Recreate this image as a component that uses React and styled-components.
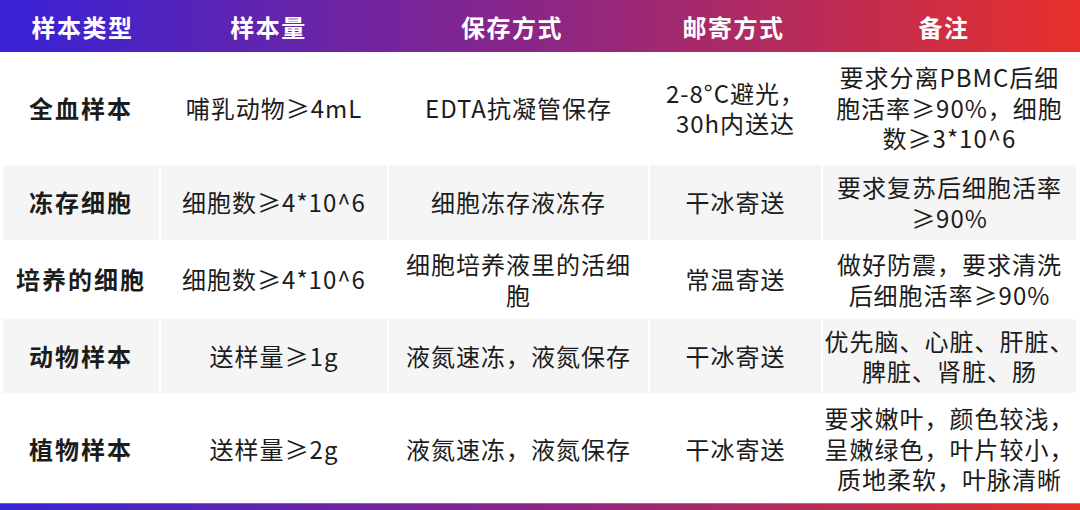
import React from "react";
import styled, { createGlobalStyle } from "styled-components";

const GlobalStyle = createGlobalStyle`
  html, body {
    margin: 0;
    padding: 0;
    background: #ffffff;
  }
  body {
    font-family: "Noto Sans CJK SC", "Noto Sans", sans-serif;
  }
`;

const COLS = "156px 226px 259px 171px 253px";
const HEAD_COLS = "159px 209px 274px 165px 252px";
const GRADIENT = "linear-gradient(90deg, #3822d6 0%, #8c2686 50%, #e7302a 100%)";

const Page = styled.div`
  width: 1080px;
  height: 510px;
  overflow: hidden;
  display: flex;
  flex-direction: column;
  background: #ffffff;
`;

const HeaderBar = styled.div`
  height: 52px;
  flex: none;
  background: ${GRADIENT};
  display: grid;
  grid-template-columns: ${HEAD_COLS};
  column-gap: 2px;
  padding-left: 3px;
  margin-bottom: 1px;
`;

const HeadCell = styled.div`
  display: flex;
  align-items: center;
  justify-content: center;
  color: #ffffff;
  font-size: 24px;
  font-weight: 700;
  letter-spacing: 1.5px;
`;

const Body = styled.div`
  display: flex;
  flex-direction: column;
  row-gap: 2px;
  padding-left: 3px;
  flex: none;
`;

const Row = styled.div`
  display: grid;
  grid-template-columns: ${COLS};
  column-gap: 2px;
  height: ${(p) => p.$h}px;
`;

const Cell = styled.div`
  background: ${(p) => (p.$shaded ? "#f5f5f5" : "#ffffff")};
  display: flex;
  flex-direction: column;
  align-items: center;
  justify-content: center;
  text-align: center;
  color: #1c1c1c;
  font-size: 24px;
  line-height: 30.5px;
  letter-spacing: ${(p) => (p.$bold ? "2px" : "1px")};
  font-weight: ${(p) => (p.$bold ? 700 : 400)};
`;

const Line = styled.span`
  display: block;
  white-space: nowrap;
`;

const FootBar = styled.div`
  margin-top: auto;
  height: 7px;
  flex: none;
  background: ${GRADIENT};
  box-shadow: inset 0 1px 0 rgba(255, 255, 255, 0.25);
`;

const headers = ["样本类型", "样本量", "保存方式", "邮寄方式", "备注"];

const rows = [
  {
    h: 110,
    cells: [
      ["全血样本"],
      ["哺乳动物≥4mL"],
      ["EDTA抗凝管保存"],
      ["2-8°C避光，", "30h内送达"],
      ["要求分离PBMC后细", "胞活率≥90%，细胞", "数≥3*10^6"],
    ],
  },
  {
    h: 75,
    cells: [
      ["冻存细胞"],
      ["细胞数≥4*10^6"],
      ["细胞冻存液冻存"],
      ["干冰寄送"],
      ["要求复苏后细胞活率", "≥90%"],
    ],
  },
  {
    h: 75,
    cells: [
      ["培养的细胞"],
      ["细胞数≥4*10^6"],
      ["细胞培养液里的活细", "胞"],
      ["常温寄送"],
      ["做好防震，要求清洗", "后细胞活率≥90%"],
    ],
  },
  {
    h: 74,
    cells: [
      ["动物样本"],
      ["送样量≥1g"],
      ["液氮速冻，液氮保存"],
      ["干冰寄送"],
      ["优先脑、心脏、肝脏、", "脾脏、肾脏、肠"],
    ],
  },
  {
    h: 108,
    cells: [
      ["植物样本"],
      ["送样量≥2g"],
      ["液氮速冻，液氮保存"],
      ["干冰寄送"],
      ["要求嫩叶，颜色较浅，", "呈嫩绿色，叶片较小，", "质地柔软，叶脉清晰"],
    ],
  },
];

export default function App() {
  return (
    <>
      <GlobalStyle />
      <Page>
        <HeaderBar>
          {headers.map((h) => (
            <HeadCell key={h}>{h}</HeadCell>
          ))}
        </HeaderBar>
        <Body>
          {rows.map((row, ri) => (
            <Row key={ri} $h={row.h}>
              {row.cells.map((lines, ci) => (
                <Cell key={ci} $shaded={ri % 2 === 1} $bold={ci === 0}>
                  {lines.map((l, li) => (
                    <Line key={li}>{l}</Line>
                  ))}
                </Cell>
              ))}
            </Row>
          ))}
        </Body>
        <FootBar />
      </Page>
    </>
  );
}
